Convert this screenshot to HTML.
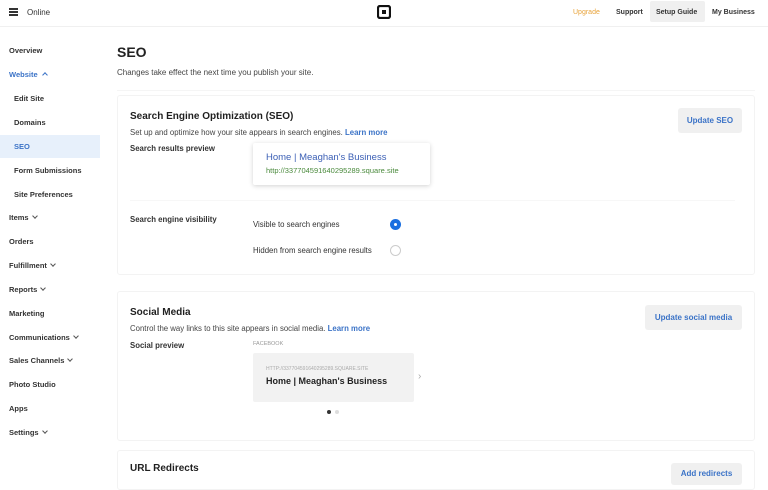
<!DOCTYPE html>
<html><head><meta charset="utf-8"><style>
*{margin:0;padding:0;box-sizing:border-box}
body{width:768px;height:480px;overflow:hidden;background:#fff;font-family:"Liberation Sans",sans-serif;color:#1f1f1f;position:relative}
.a{position:absolute;white-space:nowrap}
.nav{font-size:7.5px;font-weight:bold;color:#333;left:9px}
.sub{left:14px}
.b{font-weight:bold}
.btn{position:absolute;background:#f0f0f0;border-radius:3px;color:#3b73c7;font-weight:bold;font-size:8px;text-align:center}
.card{position:absolute;left:117px;width:638px;border:1px solid #f3f3f3;border-radius:3px}
.chev{display:inline-block;width:4px;height:4px;border-right:1.2px solid #555;border-bottom:1.2px solid #555;transform:rotate(45deg);margin-left:4px;position:relative;top:-2px}
</style></head><body>
<div class="a" style="left:0;top:0;width:768px;height:27px;border-bottom:1px solid #f0f0f0"></div>
<div class="a" style="left:9px;top:8px;width:9px;height:1.5px;background:#333;box-shadow:0 3px 0 #333,0 6px 0 #333"></div>
<div class="a" style="left:27px;top:8px;font-size:8px;color:#333">Online</div>
<svg class="a" style="left:377px;top:5px" width="14" height="14" viewBox="0 0 14 14"><rect x="1" y="1" width="12" height="12" rx="2" fill="none" stroke="#111" stroke-width="2.2"/><rect x="5" y="5" width="4" height="4" fill="#111"/></svg>
<div class="a" style="left:573px;top:9px;font-size:7px;color:#e8a33a">Upgrade</div>
<div class="a b" style="left:616px;top:9px;font-size:7px;color:#333">Support</div>
<div class="a" style="left:650px;top:1px;width:55px;height:21px;background:#f0f0f0;border-radius:2px"></div>
<div class="a b" style="left:656px;top:9px;font-size:7px;color:#333">Setup Guide</div>
<div class="a b" style="left:712px;top:9px;font-size:7px;color:#333">My Business</div>

<div class="a" style="left:0;top:135px;width:100px;height:23px;background:#e7f0fb"></div>
<div class="a nav" style="top:46px">Overview</div>
<div class="a nav" style="top:70px;color:#3b73c7">Website <span style="display:inline-block;width:4px;height:4px;border-left:1.2px solid #3b73c7;border-top:1.2px solid #3b73c7;transform:rotate(45deg);margin-left:3px"></span></div>
<div class="a nav sub" style="top:94px">Edit Site</div>
<div class="a nav sub" style="top:118px">Domains</div>
<div class="a nav sub" style="top:142px;color:#3b73c7">SEO</div>
<div class="a nav sub" style="top:166px">Form Submissions</div>
<div class="a nav sub" style="top:190px">Site Preferences</div>
<div class="a nav" style="top:213px">Items<span class="chev"></span></div>
<div class="a nav" style="top:237px">Orders</div>
<div class="a nav" style="top:261px">Fulfillment<span class="chev"></span></div>
<div class="a nav" style="top:285px">Reports<span class="chev"></span></div>
<div class="a nav" style="top:309px">Marketing</div>
<div class="a nav" style="top:333px">Communications<span class="chev"></span></div>
<div class="a nav" style="top:356px">Sales Channels<span class="chev"></span></div>
<div class="a nav" style="top:380px">Photo Studio</div>
<div class="a nav" style="top:404px">Apps</div>
<div class="a nav" style="top:428px">Settings<span class="chev"></span></div>

<div class="a" style="left:117px;top:44px;font-size:14px;font-weight:bold;color:#222">SEO</div>
<div class="a" style="left:117px;top:68px;font-size:8px;color:#444">Changes take effect the next time you publish your site.</div>
<div class="a" style="left:117px;top:90px;width:638px;height:1px;background:#f5f5f5"></div>

<div class="card" style="top:95px;height:180px"></div>
<div class="a b" style="left:130px;top:111px;font-size:10px">Search Engine Optimization (SEO)</div>
<div class="a" style="left:130px;top:128px;font-size:7.8px;color:#444">Set up and optimize how your site appears in search engines. <span style="color:#3b73c7;font-weight:bold">Learn more</span></div>
<div class="a b" style="left:130px;top:144px;font-size:7.8px;color:#333">Search results preview</div>
<div class="btn" style="left:678px;top:108px;width:64px;height:25px;line-height:25px">Update SEO</div>
<div class="a" style="left:253px;top:143px;width:177px;height:42px;background:#fff;box-shadow:0 1px 5px rgba(0,0,0,.18);border-radius:2px"></div>
<div class="a" style="left:266px;top:152px;font-size:9.5px;color:#3b5fb5">Home | Meaghan's Business</div>
<div class="a" style="left:266px;top:166px;font-size:7.5px;color:#4a8a3c">http://337704591640295289.square.site</div>
<div class="a" style="left:130px;top:200px;width:605px;height:1px;background:#f7f7f7"></div>
<div class="a b" style="left:130px;top:215px;font-size:7.8px;color:#333">Search engine visibility</div>
<div class="a" style="left:253px;top:220px;font-size:7.8px;color:#333">Visible to search engines</div>
<div class="a" style="left:390px;top:219px;width:11px;height:11px;border-radius:50%;background:#1a6fe0"></div>
<div class="a" style="left:394px;top:223px;width:3px;height:3px;border-radius:50%;background:#fff"></div>
<div class="a" style="left:253px;top:246px;font-size:7.8px;color:#333">Hidden from search engine results</div>
<div class="a" style="left:390px;top:245px;width:11px;height:11px;border-radius:50%;border:1px solid #ccc"></div>

<div class="card" style="top:291px;height:150px"></div>
<div class="a b" style="left:130px;top:307px;font-size:10px">Social Media</div>
<div class="a" style="left:130px;top:324px;font-size:7.8px;color:#444">Control the way links to this site appears in social media. <span style="color:#3b73c7;font-weight:bold">Learn more</span></div>
<div class="a b" style="left:130px;top:341px;font-size:7.8px;color:#333">Social preview</div>
<div class="btn" style="left:645px;top:305px;width:97px;height:25px;line-height:25px">Update social media</div>
<div class="a" style="left:253px;top:341px;font-size:5.5px;color:#999">FACEBOOK</div>
<div class="a" style="left:253px;top:353px;width:161px;height:49px;background:#f2f2f2;border-radius:2px"></div>
<div class="a" style="left:266px;top:366px;font-size:5px;color:#aaa">HTTP://337704591640295289.SQUARE.SITE</div>
<div class="a b" style="left:266px;top:376px;font-size:9px;color:#222">Home | Meaghan's Business</div>
<div class="a" style="left:418px;top:371px;font-size:10px;color:#aaa">›</div>
<div class="a" style="left:327px;top:410px;width:4px;height:4px;border-radius:50%;background:#333"></div>
<div class="a" style="left:335px;top:410px;width:4px;height:4px;border-radius:50%;background:#ddd"></div>

<div class="card" style="top:450px;height:40px"></div>
<div class="a b" style="left:130px;top:463px;font-size:10px">URL Redirects</div>
<div class="btn" style="left:671px;top:463px;width:71px;height:22px;line-height:22px">Add redirects</div>
</body></html>
